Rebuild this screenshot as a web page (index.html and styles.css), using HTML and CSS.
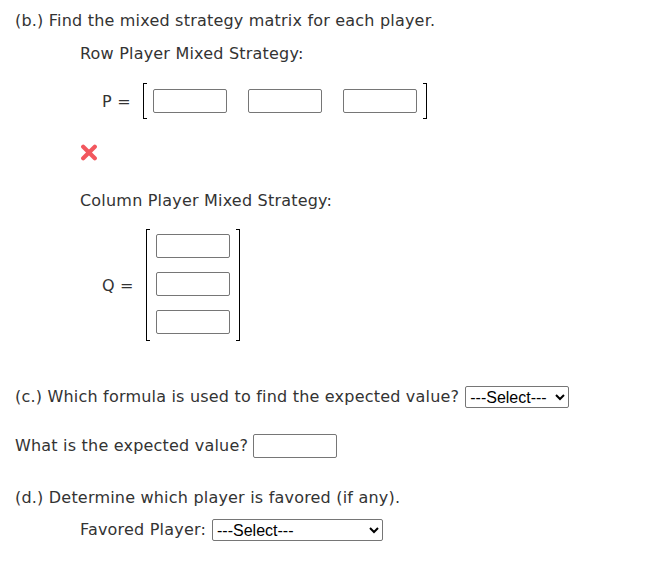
FILE: index.html
```html
<!DOCTYPE html>
<html lang="en">
<head>
<meta charset="utf-8">
<title>Mixed strategy</title>
<link rel="stylesheet" href="styles.css">
</head>
<body>
<div class="page">
  <p class="q q-b">(b.) Find the mixed strategy matrix for each player.</p>
  <p class="indent sub-row">Row Player Mixed Strategy:</p>

  <div class="matrix-line line-p">
    <span class="mlabel">P =</span>
    <div class="matrix mrow">
      <span class="lb"></span>
      <input class="cell" type="text" aria-label="p1">
      <input class="cell" type="text" aria-label="p2">
      <input class="cell" type="text" aria-label="p3">
      <span class="rb"></span>
    </div>
  </div>

  <div class="indent wrong">
    <svg width="18" height="17" viewBox="0 0 18 17" aria-hidden="true">
      <path d="M3.2 2.8 L14.8 14.2 M14.8 2.8 L3.2 14.2" stroke="#f2575e" stroke-width="4.2" stroke-linecap="round" fill="none"/>
    </svg>
  </div>

  <p class="indent sub-col">Column Player Mixed Strategy:</p>

  <div class="matrix-line line-q">
    <span class="mlabel">Q =</span>
    <div class="matrix mcol">
      <span class="lb"></span>
      <div class="col">
        <input class="cell" type="text" aria-label="q1">
        <input class="cell" type="text" aria-label="q2">
        <input class="cell" type="text" aria-label="q3">
      </div>
      <span class="rb"></span>
    </div>
  </div>

  <div class="qrow row-c">
    <span>(c.) Which formula is used to find the expected value?</span>
    <select class="sel sel-c" aria-label="formula"><option>---Select---</option></select>
  </div>

  <div class="qrow row-ev">
    <span>What is the expected value?</span>
    <input class="ev" type="text" aria-label="expected value">
  </div>

  <p class="q q-d">(d.) Determine which player is favored (if any).</p>

  <div class="qrow indent row-fav">
    <span>Favored Player:</span>
    <select class="sel sel-fav" aria-label="favored player"><option>---Select---</option></select>
  </div>
</div>
</body>
</html>
```

FILE: styles.css
```css
html, body {
  margin: 0;
  padding: 0;
  background: #fff;
}

.page {
  padding: 11px 0 0 15px;
  font-family: "DejaVu Sans", Verdana, sans-serif;
  font-size: 16px;
  line-height: 20px;
  letter-spacing: 0.2px;
  color: #333;
  display: flex;
  flex-direction: column;
  align-items: flex-start;
}

p {
  margin: 0;
}

.indent {
  margin-left: 65px;
}

.sub-row { margin-top: 13px; }

.matrix-line {
  display: flex;
  align-items: center;
  margin-left: 87px;
  gap: 12px;
}

.line-p { margin-top: 19px; }
.line-q { margin-top: 18px; }

.mlabel {
  padding-top: 2px;
  white-space: nowrap;
}

.matrix {
  display: flex;
  align-items: stretch;
}

.lb, .rb {
  width: 3px;
  border-top: 1px solid #000;
  border-bottom: 1px solid #000;
}
.lb { border-left: 1px solid #000; }
.rb { border-right: 1px solid #000; }

.mrow {
  height: 36px;
  align-items: center;
}
.mrow .lb, .mrow .rb {
  align-self: stretch;
}
.mrow .lb { margin-right: 6px; }
.mrow .rb { margin-left: 6px; }
.mrow .cell + .cell { margin-left: 21px; }

.mcol .col {
  display: flex;
  flex-direction: column;
  gap: 14px;
  padding: 5px 6px 7px 6px;
}

.cell {
  box-sizing: border-box;
  width: 74px;
  height: 24px;
  margin: 0;
  padding: 0 4px;
  border: 1px solid #767676;
  border-radius: 2px;
  background: #fff;
  font: 16px "Liberation Sans", Arial, sans-serif;
}

.wrong {
  margin-top: 25px;
  height: 17px;
  display: flex;
}
.wrong svg { display: block; }

.sub-col { margin-top: 30px; }

.qrow {
  display: flex;
  align-items: center;
  gap: 6px;
}

.row-c { margin-top: 45px; height: 22px; }
.row-ev { margin-top: 26px; height: 24px; gap: 5px; }
.q-d { margin-top: 30px; }
.row-fav { margin-top: 11px; height: 22px; }

.sel {
  box-sizing: border-box;
  height: 22px;
  margin: 0;
  font: 16px "Liberation Sans", Arial, sans-serif;
  letter-spacing: 0;
  color: #000;
  background: #fff;
  border: 1px solid #767676;
  border-radius: 2px;
}
.sel-c { width: 104px; }
.sel-fav { width: 171px; }

.ev {
  box-sizing: border-box;
  width: 84px;
  height: 24px;
  margin: 0;
  padding: 0 4px;
  border: 1px solid #767676;
  border-radius: 2px;
  background: #fff;
  font: 16px "Liberation Sans", Arial, sans-serif;
}
```
